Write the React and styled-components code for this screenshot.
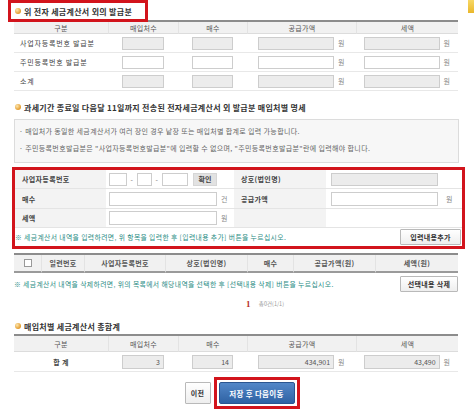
import React from "react";
import styled, { createGlobalStyle } from "styled-components";

const RED = "#d2141c";
const TEAL = "#2a8c84";

const GlobalStyle = createGlobalStyle`
  html, body { margin: 0; padding: 0; background: #fff; }
  body {
    font-family: "Noto Sans CJK KR", "Noto Sans", sans-serif;
    font-size: 7px;
    letter-spacing: 0.35px;
    color: #444;
  }
  * { box-sizing: border-box; }
`;

function App() {
  return (
    <Page>
      <GlobalStyle />
      <YellowTab />

      <TitleBox>
        <Heading $flat>
          <Bullet />위 전자 세금계산서 외의 발급분
        </Heading>
      </TitleBox>

      {/* 전자세금계산서 외 발급분 */}
      <Table $cols="94px 70px 69px 109px 102px">
        <Th $h={12}>구분</Th>
        <Th $h={12}>매입처수</Th>
        <Th $h={12}>매수</Th>
        <Th $h={12}>공급가액</Th>
        <Th $h={12}>세액</Th>
        {[
          ["사업자등록번호 발급분", true],
          ["주민등록번호 발급분", false],
          ["소계", true],
        ].map(([label, off]) => (
          <React.Fragment key={label}>
            <Td $align="flex-start" $wide>{label}</Td>
            <Td><Field $w={42} $off={off} readOnly /></Td>
            <Td><Field $w={41} $off={off} readOnly /></Td>
            <Td><Field $w={76} $off={off} readOnly /><Unit>원</Unit></Td>
            <Td><Field $w={76} $off={off} readOnly /><Unit>원</Unit></Td>
          </React.Fragment>
        ))}
      </Table>

      <Heading $mt={10}>
        <Bullet />과세기간 종료일 다음달 11일까지 전송된 전자세금계산서 외 발급분 매입처별 명세
      </Heading>

      <NoteBox>
        <NoteLine>· 매입처가 동일한 세금계산서가 여러 장인 경우 낱장 또는 매입처별 합계로 입력 가능합니다.</NoteLine>
        <NoteLine>· 주민등록번호발급분은 "사업자등록번호발급분"에 입력할 수 없으며, "주민등록번호발급분"란에 입력해야 합니다.</NoteLine>
      </NoteBox>

      <FormBox>
        <Label $h={19}>사업자등록번호</Label>
        <Value $h={19}>
          <Field $w={18} readOnly />
          <Dash>-</Dash>
          <Field $w={15} readOnly />
          <Dash>-</Dash>
          <Field $w={26} readOnly />
          <SmallBtn>확인</SmallBtn>
        </Value>
        <Label $h={19}>상호(법인명)</Label>
        <Value $h={19} $pl={5}><Field $w={107} $off readOnly /></Value>

        <Label $h={20}>매수</Label>
        <Value $h={20}><Field $w={108} $h={14} readOnly /><Unit>건</Unit></Value>
        <Label $h={20}>공급가액</Label>
        <Value $h={20} $pl={5}><Field $w={107} $h={14} readOnly /><Unit $gap={8}>원</Unit></Value>

        <Label $h={19}>세액</Label>
        <Value $h={19}><Field $w={108} $h={14} readOnly /><Unit>원</Unit></Value>
        <Label $h={19} />
        <Value $h={19} />

        <NoteRow>
          <Note>※ 세금계산서 내역을 입력하려면, 위 항목을 입력한 후 [입력내용 추가] 버튼을 누르십시오.</Note>
          <Btn $w={61}>입력내용추가</Btn>
        </NoteRow>
      </FormBox>

      {/* 입력된 목록 */}
      <Table $mt={4} $cols="27px 43px 81px 82px 46px 82px 83px">
        <Th $h={18} $bold $strong><Check /></Th>
        <Th $h={18} $bold $strong>일련번호</Th>
        <Th $h={18} $bold $strong>사업자등록번호</Th>
        <Th $h={18} $bold $strong>상호(법인명)</Th>
        <Th $h={18} $bold $strong>매수</Th>
        <Th $h={18} $bold $strong>공급가액(원)</Th>
        <Th $h={18} $bold $strong>세액(원)</Th>
      </Table>

      <ActionRow>
        <Note>※ 세금계산서 내역을 삭제하려면, 위의 목록에서 해당내역을 선택한 후 [선택내용 삭제] 버튼을 누르십시오.</Note>
        <Btn $w={58}>선택내용 삭제</Btn>
      </ActionRow>

      <Pager>
        <PageNum>1</PageNum>
        <PageInfo>총0건(1/1)</PageInfo>
      </Pager>

      <Heading $mt={11}>
        <Bullet />매입처별 세금계산서 총합계
      </Heading>

      <Table $mt={2} $cols="94px 70px 69px 109px 102px">
        <Th $h={16}>구분</Th>
        <Th $h={16}>매입처수</Th>
        <Th $h={16}>매수</Th>
        <Th $h={16}>공급가액</Th>
        <Th $h={16}>세액</Th>
        <Td $h={20} $bold>합 계</Td>
        <Td $h={20}><Field $w={42} $h={14} $off readOnly defaultValue="3" /></Td>
        <Td $h={20}><Field $w={41} $h={14} $off readOnly defaultValue="14" /></Td>
        <Td $h={20}><Field $w={76} $h={14} $off readOnly defaultValue="434,901" /><Unit>원</Unit></Td>
        <Td $h={20}><Field $w={76} $h={14} $off readOnly defaultValue="43,490" /><Unit>원</Unit></Td>
      </Table>

      <ButtonRow>
        <Btn $w={26} $h={22}>이전</Btn>
        <Highlight>
          <PrimaryBtn>저장 후 다음이동</PrimaryBtn>
        </Highlight>
      </ButtonRow>
    </Page>
  );
}

export default App;

const Page = styled.div`
  position: relative;
  width: 474px;
  height: 409px;
  overflow: hidden;
`;

// floating tab peeking in from the right edge
const YellowTab = styled.div`
  position: absolute;
  top: 0;
  right: 0;
  width: 6px;
  height: 13px;
  background: linear-gradient(#f7d866, #eab72b);
`;

const TitleBox = styled.div`
  position: relative;
  z-index: 1;
  margin: 0 0 -2px 8px;
  width: 140px;
  height: 22px;
  border: 3px solid ${RED};
  display: flex;
  align-items: center;
  padding-left: 4px;
`;

const Heading = styled.h2`
  margin: ${(p) => p.$mt || 0}px 0 0;
  height: 12px;
  display: flex;
  align-items: center;
  gap: 3px;
  padding-left: ${(p) => (p.$flat ? 0 : 15)}px;
  font-size: 8px;
  font-weight: 700;
  letter-spacing: 0.3px;
  color: #333;
  white-space: nowrap;
`;

const Bullet = styled.span`
  flex: none;
  width: 6px;
  height: 6px;
  border-radius: 50%;
  background: radial-gradient(circle at 35% 35%, #fde7b0, #e39a2a 70%);
`;

const Table = styled.div`
  position: relative;
  display: grid;
  grid-template-columns: ${(p) => p.$cols};
  width: 444px;
  margin: ${(p) => p.$mt || 0}px 0 0 14px;
  border-top: 2px solid #8c8c8c;
`;

const Th = styled.div`
  height: ${(p) => p.$h}px;
  display: flex;
  align-items: center;
  justify-content: center;
  background: #f1f1f1;
  color: #555;
  font-weight: ${(p) => (p.$bold ? 700 : 400)};
  border-bottom: ${(p) => (p.$strong ? "2px solid #9a9a9a" : "1px solid #dcdcdc")};
  white-space: nowrap;

  & + & {
    border-left: 1px solid #e3e3e3;
  }
`;

const Td = styled.div`
  height: ${(p) => p.$h || 19}px;
  display: flex;
  align-items: center;
  justify-content: ${(p) => p.$align || "center"};
  padding: 0 6px;
  border-bottom: 1px solid #e8e8e8;
  color: #444;
  font-weight: ${(p) => (p.$bold ? 700 : 400)};
  letter-spacing: ${(p) => (p.$wide ? "0.8px" : "inherit")};
  white-space: nowrap;
`;

const Field = styled.input`
  flex: none;
  width: ${(p) => p.$w}px;
  height: ${(p) => p.$h || 13}px;
  margin: 0;
  padding: 0 3px;
  border: 1px solid #cdcdcd;
  background: ${(p) => (p.$off ? "#ececec" : "#fff")};
  font-family: inherit;
  font-size: 7px;
  letter-spacing: 0;
  color: #555;
  text-align: right;
  outline: none;
`;

const Unit = styled.span`
  margin-left: ${(p) => p.$gap || 4}px;
  color: #888;
`;

const NoteBox = styled.div`
  margin: 6px 0 0 14px;
  width: 445px;
  height: 44px;
  padding: 5px 4px 0;
  background: #f7f7f7;
  border: 1px solid #dcdcdc;
  display: flex;
  flex-direction: column;
  gap: 5px;
`;

const NoteLine = styled.div`
  line-height: 12px;
  color: #666;
  white-space: nowrap;
`;

const FormBox = styled.div`
  margin: 4px 0 0 12px;
  width: 453px;
  border: 3px solid ${RED};
  display: grid;
  grid-template-columns: 91px 128px 92px 136px;
`;

const Label = styled.div`
  height: ${(p) => p.$h}px;
  display: flex;
  align-items: center;
  padding-left: 7px;
  background: #f3f3f3;
  border-bottom: 1px solid #e4e4e4;
  font-weight: 700;
  color: #444;
`;

const Value = styled.div`
  height: ${(p) => p.$h}px;
  display: flex;
  align-items: center;
  padding-left: ${(p) => p.$pl ?? 3}px;
  border-bottom: 1px solid #e4e4e4;
`;

const Dash = styled.span`
  width: 10px;
  text-align: center;
  color: #777;
`;

const SmallBtn = styled.button`
  margin-left: 5px;
  width: 24px;
  height: 13px;
  padding: 0;
  border: 1px solid #d6d6d6;
  background: #e2e2e2;
  font-family: inherit;
  font-size: 7px;
  font-weight: 700;
  color: #444;
`;

const NoteRow = styled.div`
  grid-column: 1 / -1;
  height: 18px;
  display: flex;
  align-items: center;
  justify-content: space-between;
  padding-right: 1px;
`;

const Note = styled.span`
  color: ${TEAL};
  white-space: nowrap;
  font-size: 6.8px;
  letter-spacing: 0.4px;
`;

const Btn = styled.button`
  flex: none;
  width: ${(p) => p.$w}px;
  height: ${(p) => p.$h || 16}px;
  padding: 0;
  border: 1px solid #b9b9b9;
  border-radius: 1px;
  background: linear-gradient(#ffffff, #eeeeee);
  font-family: inherit;
  font-size: 7px;
  font-weight: 700;
  letter-spacing: 0.3px;
  color: #333;
  white-space: nowrap;
  cursor: pointer;
`;

const Check = styled.span`
  width: 8px;
  height: 8px;
  border: 1px solid #999;
  background: #fff;
`;

const ActionRow = styled.div`
  margin: 3px 0 0 14px;
  width: 444px;
  height: 15px;
  display: flex;
  align-items: center;
  justify-content: space-between;
`;

const Pager = styled.div`
  margin-top: 8px;
  height: 10px;
  display: flex;
  align-items: center;
  gap: 8px;
  padding-left: 246px;
`;

const PageNum = styled.span`
  font-family: "Liberation Serif", serif;
  font-size: 9px;
  font-weight: 700;
  color: #b8322a;
`;

const PageInfo = styled.span`
  font-size: 5.5px;
  letter-spacing: 0;
  color: #999;
`;

const ButtonRow = styled.div`
  margin-top: 5px;
  display: flex;
  align-items: center;
  justify-content: center;
  gap: 3px;
  padding-left: 10px;
`;

const Highlight = styled.div`
  border: 3px solid ${RED};
  padding: 2px;
`;

const PrimaryBtn = styled.button`
  width: 76px;
  height: 22px;
  padding: 0;
  border: 1px solid #2a5590;
  border-radius: 2px;
  background: linear-gradient(#5287c8, #2f62a3);
  font-family: inherit;
  font-size: 7.5px;
  font-weight: 700;
  letter-spacing: 0.3px;
  color: #fff;
  cursor: pointer;
`;
